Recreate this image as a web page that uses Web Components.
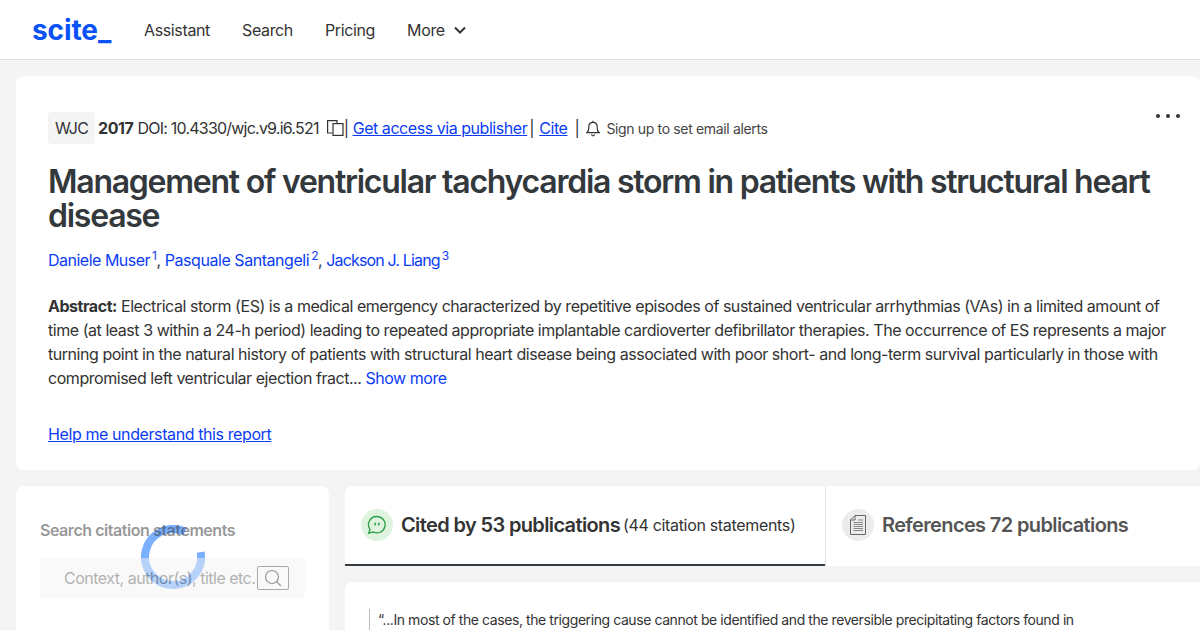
<!DOCTYPE html>
<html><head><meta charset="utf-8"><style>
html,body{margin:0;padding:0;height:630px;overflow:hidden;background:#f4f4f4;font-family:Inter,"Liberation Sans",sans-serif}
</style></head><body>
<site-header></site-header>
<report-page></report-page>
<script>
const ICON={
copy:'<svg width="17" height="16" viewBox="0 0 17 16" fill="none" stroke="#333" stroke-width="1.2"><path d="M5 13H.6V.6H10V3"/><rect x="6" y="3.600" width="10" height="11.800"/></svg>',
bell:'<svg width="14" height="17" viewBox="0 0 14 17" fill="none" stroke="#333" stroke-width="1.2"><path d="M1 12.600h12c-1.300-1-1.800-2.400-1.800-4.600V6.600C11.200 4 9.500 2.400 7 2.400S2.800 4 2.800 6.600V8c0 2.200-.5 3.600-1.800 4.600Z"/><path d="M7 .8v1.600M5.400 14.400c.3 1 .9 1.400 1.600 1.400s1.300-.4 1.600-1.400"/></svg>',
chev:'<svg width="12" height="8" viewBox="0 0 12 8" fill="none" stroke="#333" stroke-width="2"><path d="M1 1.500l5 5 5-5"/></svg>'};
function def(name,html,css){customElements.define(name,class extends HTMLElement{constructor(){super();this.attachShadow({mode:'open'}).innerHTML='<style>'+css+'</style>'+html}})}
def('site-header',`<a class="logo">scite_</a><nav><a>Assistant</a><a>Search</a><a>Pricing</a><a class="more">More ${ICON.chev}</a></nav>`,`
:host{display:flex;align-items:center;box-sizing:border-box;height:60px;background:#fff;border-bottom:1px solid #ddd;padding-left:32px}
.logo{font:700 28px/1 Inter,sans-serif;color:#0a52f5;letter-spacing:-.1px;width:112px}
nav{display:flex;gap:32px;font-size:16px;color:#333;letter-spacing:-.36px}
.more{display:flex;align-items:center;gap:9px}`);
def('meta-line',`<span class="j">WJC</span><b>2017</b><span class="doi">DOI: 10.4330/wjc.v9.i6.521</span>${ICON.copy}<span class="p p1">|</span><a>Get access via publisher</a><span class="p p2">|</span><a>Cite</a><span class="p p3">|</span>${ICON.bell}<span class="al">Sign up to set email alerts</span>`,`
:host{display:flex;align-items:center;font-size:16px;color:#333;letter-spacing:-.2px;height:32px}
.j{box-sizing:border-box;width:47px;text-align:center;background:#f4f4f4;border-radius:4px;height:32px;line-height:32px;margin-right:3px;letter-spacing:-.8px}
b{font-weight:700;margin-right:4px;letter-spacing:-.4px}.doi{margin-right:8px;letter-spacing:-.78px;white-space:nowrap}svg{flex:none}
a{color:#0a3cf5;text-decoration:underline;letter-spacing:-.45px}
.p{display:block;width:5px;text-align:center}.p1{margin:0 4px 0 0}.p2{margin:0 5px 0 2px}.p3{margin:0 7px 0 7px}
.al{font-size:14px;margin-left:6px;color:#444;letter-spacing:-.35px}`);
def('report-head',`<meta-line></meta-line><div class="dots"><i></i><i></i><i></i></div><h1>Management of ventricular tachycardia storm in patients with structural heart disease</h1>
<div class="au"><a class="a1">Daniele Muser</a><sup>1</sup><span>, </span><a>Pasquale Santangeli</a><sup>2</sup><span>, </span><a class="a3">Jackson J. Liang</a><sup>3</sup></div>
<div class="ab"><span class="l"><b>Abstract:</b><span> Electrical storm (ES) is a medical emergency characterized by repetitive episodes of sustained ventricular arrhythmias (VAs) in a limited amount of</span></span>
<span class="l">time (at least 3 within a 24-h period) leading to repeated appropriate implantable cardioverter defibrillator therapies. The occurrence of ES represents a major</span>
<span class="l">turning point in the natural history of patients with structural heart disease being associated with poor short- and long-term survival particularly in those with</span>
<span class="l"><span>compromised left ventricular ejection fract... </span><a>Show more</a></span></div>
<a class="help">Help me understand this report</a>`,`
:host{display:block;position:relative;box-sizing:border-box;height:394px;background:#fff;border-radius:8px;padding:36px 32px 0;color:#333}
.dots{position:absolute;top:38px;right:20px;display:flex;gap:6px}.dots i{width:4px;height:4px;border-radius:50%;background:#333}
h1{margin:21px 0 0;font-size:32px;line-height:34px;font-weight:600;letter-spacing:-1.25px;color:#33383c}
.au{margin-top:15px;font-size:16px;line-height:24px;letter-spacing:-.45px;color:#333}
.a1{letter-spacing:-.5px}.a3{letter-spacing:-.84px}
a{color:#0a3cf5}sup{font-size:12px;line-height:0;color:#0a3cf5;margin-left:2px}
.ab{margin:22px 0 0;font-size:16px;line-height:24px;letter-spacing:-.458px}
.l{display:block;white-space:pre}
.help{display:block;margin-top:32px;font-size:16px;line-height:24px;letter-spacing:-.4px;text-decoration:underline}`);
def('search-card',`<svg class="spin" width="64" height="64" viewBox="0 0 64 64" fill="none"><path d="M59.600 27.100A28 28 0 1 1 44 6.700" stroke="#7ab0ff" stroke-width="8"/></svg><h4>Search citation statements</h4><div class="in"><span>Context, author(s), title etc.</span><i class="b"><svg width="20" height="20" viewBox="0 0 20 20" fill="none" stroke="#333" stroke-width="1.200"><circle cx="9" cy="9" r="6.500"/><path d="M13.800 13.800L18 18"/></svg></i></div>`,`
:host{display:block;position:relative;box-sizing:border-box;width:313px;height:144px;background:#fff;border-radius:8px 8px 0 0;padding:34px 24px 0;flex:none}
h4{position:relative;margin:0;font-size:16px;line-height:20px;font-weight:600;color:#333;opacity:.5;letter-spacing:-.45px}
.in{position:relative;margin-top:18px;height:40px;background:#f4f4f4;border-radius:4px;display:flex;align-items:center;padding-left:24px;font-size:16px;color:#666;letter-spacing:-.5px;opacity:.5}
.in span{width:193px;white-space:nowrap}.b{box-sizing:border-box;display:flex;align-items:center;justify-content:center;width:32px;height:24px;border:1px solid #555;border-radius:2px}
.spin{position:absolute;left:125px;top:39px}`);
def('cite-tabs',`<div class="t on"><span class="c g"><svg width="20" height="20" viewBox="0 0 20 20" fill="none" stroke="#2a9d45" stroke-width="1.300"><path d="M10 1.500a8.200 8.200 0 1 1-4 15.400L1.600 18.200 3 14.400A8.200 8.200 0 0 1 10 1.500Z"/><path d="M8.600 7.800l-.7 2.600M12.200 7.800l-.7 2.600" stroke-width="1.500"/></svg></span><b>Cited by 53 publications</b><small>(44 citation statements)</small></div>
<div class="t r"><span class="c n"><svg width="16" height="20" viewBox="0 0 16 20" fill="none" stroke="#666" stroke-width="1"><path d="M5 .5H15.500V19.500H.5V5Z"/><path d="M.5 5H5V.5"/><path d="M8 5h5M3.500 7.500h9.500M3.500 9.500h9.500M3.500 11.500h9.500M3.500 13.500h9.500M3.500 15.500h9.500" stroke="#888"/></svg></span><b>References 72 publications</b></div>`,`
:host{display:flex;background:#fff;height:80px;border-radius:8px 0 0 0}
.t{display:flex;align-items:center;box-sizing:border-box;height:80px;padding-left:16px;flex:none}
.on{width:480px;border-bottom:2px solid #333a40;color:#333}.r{flex:1;border-left:1px solid #e2e2e2;color:#555;padding-left:16px;padding-bottom:2px}
.c{width:32px;height:32px;border-radius:50%;display:flex;align-items:center;justify-content:center;margin-right:8px;flex:none}
.g{background:#def4de}.n{background:#ececec}
b{font-size:20px;font-weight:600;letter-spacing:-.63px}small{font-size:16px;margin-left:3px;letter-spacing:-.33px}`);
def('quote-card',`<blockquote>“...In most of the cases, the triggering cause cannot be identified and the reversible precipitating factors found in</blockquote>`,`
:host{display:block;box-sizing:border-box;height:48px;background:#fff;border-radius:8px 0 0 0;margin-top:16px;padding:27px 24px 0;color:#333}
blockquote{margin:0;border-left:1px solid #bbb;padding-left:8px;font-size:14px;line-height:21px;height:21px;letter-spacing:-.42px;white-space:nowrap}`);
def('report-page',`<report-head></report-head><div class="row"><search-card></search-card><div class="main"><cite-tabs></cite-tabs><quote-card></quote-card></div></div>`,`
:host{display:block;padding:16px 0 0 16px}
.row{display:flex;gap:16px;margin-top:16px}.main{flex:1}`);
</script></body></html>
